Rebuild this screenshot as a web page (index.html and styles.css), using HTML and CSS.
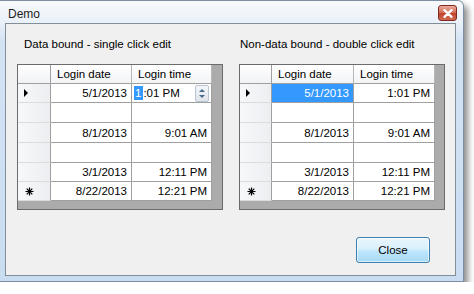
FILE: index.html
```html
<!doctype html>
<html>
<head>
<meta charset="utf-8">
<title>Demo</title>
<link rel="stylesheet" href="styles.css">
</head>
<body>

<div class="window">
	<div class="titlebar">
		<span class="title">Demo</span>
		<span class="closebox">
			<svg width="10" height="9" viewBox="0 0 10 9"><path d="M1.5 1.2 L8.5 7.8 M8.5 1.2 L1.5 7.8" stroke="#fff" stroke-width="2.4" stroke-linecap="round"/></svg>
		</span>
	</div>

	<div class="client">
		<div class="panels">

			<div class="panel">
				<div class="caption capLeft">Data bound - single click edit</div>
				<div class="dgv">
					<div class="grid gridLeft">
						<div class="corner"></div><div class="hdr">Login date</div><div class="hdr">Login time</div>

						<div class="rh"><span class="arrow"></span></div><div class="cell">5/1/2013</div>
						<div class="cell edit"><span class="picker"><span class="sel">1</span>:01 PM</span>
							<span class="spin"><span class="up"></span><span class="down"></span></span>
						</div>

						<div class="rh"></div><div class="cell"></div><div class="cell"></div>
						<div class="rh"></div><div class="cell">8/1/2013</div><div class="cell">9:01 AM</div>
						<div class="rh"></div><div class="cell"></div><div class="cell"></div>
						<div class="rh"></div><div class="cell">3/1/2013</div><div class="cell">12:11 PM</div>
						<div class="rh"><svg class="star" width="9" height="9" viewBox="0 0 9 9"><path d="M4.5 0.5 V8.5 M0.5 4.5 H8.5 M1.7 1.7 L7.3 7.3 M7.3 1.7 L1.7 7.3" stroke="#000" stroke-width="1.2"/></svg></div>
						<div class="cell">8/22/2013</div><div class="cell">12:21 PM</div>
					</div>
				</div>
			</div>

			<div class="panel">
				<div class="caption capRight">Non-data bound - double click edit</div>
				<div class="dgv">
					<div class="grid gridRight">
						<div class="corner"></div><div class="hdr">Login date</div><div class="hdr">Login time</div>

						<div class="rh"><span class="arrow"></span></div><div class="cell selected">5/1/2013</div><div class="cell">1:01 PM</div>
						<div class="rh"></div><div class="cell"></div><div class="cell"></div>
						<div class="rh"></div><div class="cell">8/1/2013</div><div class="cell">9:01 AM</div>
						<div class="rh"></div><div class="cell"></div><div class="cell"></div>
						<div class="rh"></div><div class="cell">3/1/2013</div><div class="cell">12:11 PM</div>
						<div class="rh"><svg class="star" width="9" height="9" viewBox="0 0 9 9"><path d="M4.5 0.5 V8.5 M0.5 4.5 H8.5 M1.7 1.7 L7.3 7.3 M7.3 1.7 L1.7 7.3" stroke="#000" stroke-width="1.2"/></svg></div>
						<div class="cell">8/22/2013</div><div class="cell">12:21 PM</div>
					</div>
				</div>
			</div>

		</div>

		<div class="footer">
			<button class="btn">Close</button>
		</div>
	</div>
</div>

</body>
</html>
```

FILE: styles.css
```css
body {
	margin: 0;
	background: #ffffff;
	font-family: "Liberation Sans", Arial, sans-serif;
	font-size: 11.5px;
	color: #000;
}

.window {
	width: 464px;
	height: 282px;
	box-sizing: border-box;
	border: 1px solid #7d8ea3;
	border-left: 0;
	border-radius: 0 6px 0 0;
	background: linear-gradient(180deg, #f7f9fc 0px, #e9f0f8 22px, #d3e3f4 40px, #c9ddf1 100%);
	padding: 0 7px 5px 5px;
	box-shadow: 4px 5px 6px rgba(0, 0, 0, 0.45);
	display: flex;
	flex-direction: column;
}

.titlebar {
	height: 22px;
	display: flex;
	align-items: center;
	justify-content: space-between;
}

.title {
	font-size: 12px;
	margin-left: 3px;
	margin-top: 4px;
	color: #1b1b1b;
}

.closebox {
	width: 19px;
	height: 16px;
	box-sizing: border-box;
	border: 1px solid #7c2a22;
	border-radius: 3px;
	background: linear-gradient(180deg, #eaa99b 0%, #d66f5a 45%, #c0412b 55%, #d36a52 100%);
	display: flex;
	align-items: center;
	justify-content: center;
	margin-right: -1px;
	margin-top: 2px;
}

.client {
	flex: 1;
	border: 1px solid #838e9b;
	background: #f0f0f0;
	display: flex;
	flex-direction: column;
}

.panels {
	display: flex;
	gap: 16px;
	padding: 13px 0 0 11px;
}

.caption {
	height: 14px;
	line-height: 14px;
	margin-bottom: 13px;
	white-space: nowrap;
}

.capLeft {
	margin-left: 7px;
}

.capRight {
	margin-left: 1px;
}

.dgv {
	width: 206px;
	height: 146px;
	box-sizing: border-box;
	border: 1px solid #6b6b6b;
	background: #ababab;
}

.grid {
	display: grid;
	grid-template-rows: 19px 19px 20px 20px 20px 19px 19px;
}

.gridLeft {
	grid-template-columns: 33px 81px 80px;
	width: 194px;
}

.gridRight {
	grid-template-columns: 32px 82px 81px;
	width: 195px;
}

.corner {
	background: linear-gradient(180deg, #ffffff, #f1f2f4);
	border-right: 1px solid #a0a0a0;
	border-bottom: 1px solid #a0a0a0;
}

.hdr {
	background: linear-gradient(180deg, #ffffff, #f3f4f6);
	border-right: 1px solid #b7b7b7;
	border-bottom: 1px solid #a0a0a0;
	padding-left: 6px;
	line-height: 18px;
	white-space: nowrap;
}

.rh {
	background: linear-gradient(90deg, #f7f8fa, #eceef1);
	border-right: 1px solid #a0a0a0;
	border-bottom: 1px solid #dcdcdc;
	display: flex;
	align-items: center;
	padding-left: 6px;
}

.cell {
	background: #fff;
	border-right: 1px solid #a0a0a0;
	border-bottom: 1px solid #a0a0a0;
	text-align: right;
	padding-right: 4px;
	display: flex;
	align-items: center;
	justify-content: flex-end;
	white-space: nowrap;
}

.selected {
	background: #3399ff;
	color: #fff;
}

.arrow {
	width: 0;
	height: 0;
	border-left: 4px solid #000;
	border-top: 4px solid transparent;
	border-bottom: 4px solid transparent;
}

.star {
	display: block;
	margin-left: 1px;
}

.edit {
	justify-content: space-between;
	padding: 1px 2px 1px 1px;
}

.picker {
	padding-left: 1px;
}

.sel {
	background: #3399ff;
	color: #fff;
	padding: 1px 2px 1px 1px;
}

.spin {
	width: 14px;
	height: 17px;
	box-sizing: border-box;
	border: 1px solid #b8c4d2;
	border-radius: 2px;
	background: linear-gradient(180deg, #f4f6f9, #dfe4ea);
	display: flex;
	flex-direction: column;
	align-items: center;
	justify-content: center;
	gap: 3px;
}

.up {
	width: 0;
	height: 0;
	border-bottom: 3px solid #4a6a8e;
	border-left: 3px solid transparent;
	border-right: 3px solid transparent;
}

.down {
	width: 0;
	height: 0;
	border-top: 3px solid #4a6a8e;
	border-left: 3px solid transparent;
	border-right: 3px solid transparent;
}

.footer {
	display: flex;
	justify-content: flex-end;
	padding: 27px 25px 0 0;
}

.btn {
	width: 74px;
	height: 26px;
	border: 1px solid #3c7fb1;
	border-radius: 3px;
	background: linear-gradient(180deg, #eaf6fd 0%, #d9f0fc 45%, #bee6fd 55%, #a7d9f5 100%);
	box-shadow: inset 0 0 0 1px rgba(255, 255, 255, 0.6);
	font-family: "Liberation Sans", Arial, sans-serif;
	font-size: 11.5px;
	color: #000;
	padding: 0;
}
```
